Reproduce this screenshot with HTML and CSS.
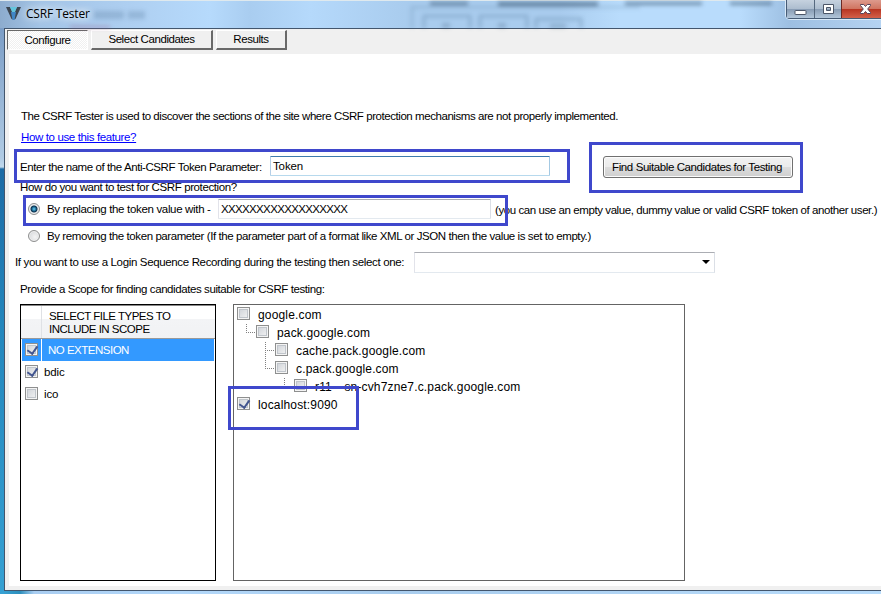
FILE: index.html
```html
<!DOCTYPE html>
<html lang="en">
<head>
  <meta charset="UTF-8">
  <title>CSRF Tester</title>
  <link rel="stylesheet" href="styles.css">
</head>
<body>
  <div class="window">
    <header class="titlebar">
      <svg class="logo" width="15" height="14" viewBox="0 0 15 14">
        <path d="M0 1h4l3 6 .5 6.500L5.500 13z" fill="#3d4650"/>
        <path d="M15 1h-4L8 7l-.5 6.500L9.500 13z" fill="#3d4650"/>
        <path d="M4 1h7L9 6H6z" fill="#63c5dc"/>
        <path d="M5 6h5L8.500 14h-2z" fill="#3f86c6"/>
      </svg>
      <h1 class="title">CSRF Tester</h1>
      <div class="glass">
        <svg width="710" height="28" viewBox="0 0 710 28">
          <g fill="#3d5f86">
            <path d="M24 10h30v8H24zM58 10h17v8H58z" opacity=".22"/>
            <path d="M0 25h40v3H0z" fill="#9c5f8d" opacity=".5"/>
          </g>
          <g fill="none" stroke="#4d6f92" stroke-width="3">
            <path d="M342 28V6H570" opacity=".2"/>
            <path d="M354 30V15H400V30M410 30V15H457V30M466 30V18H511V30" opacity=".3"/>
          </g>
          <g fill="#27425c" opacity=".55">
            <path d="M360 1h38v3H360zM428 1h100v4H428zM555 1h77v3h-77zM660 1h42v3h-42z"/>
            <path d="M372 22h8v5h-8zM428 22h8v5h-8zM480 23h16v5h-16z" opacity=".4"/>
          </g>
        </svg>
      </div>
      <div class="win-buttons">
        <span class="win-btn min"><svg width="13" height="13" viewBox="0 0 13 13"><rect x="1" y="7.500" width="11" height="4" rx=".5" fill="#fff" stroke="#4c5668"/></svg></span>
        <span class="win-btn max"><svg width="13" height="13" viewBox="0 0 13 13"><path fill-rule="evenodd" d="M1.500 1.500h10v9h-10zM4.500 4.500h4v3h-4z" fill="#fff" stroke="#4c5668"/></svg></span>
        <span class="win-btn close"><svg width="13" height="12" viewBox="0 0 13 12"><path d="M1.500 1.500h3.200l1.800 2 1.800-2h3.200v1L8.700 6l2.800 3.500v1H8.300l-1.800-2-1.800 2H1.500v-1L4.300 6 1.500 2.500z" fill="#fff" stroke="#58445a"/></svg></span>
      </div>
    </header>

    <main class="client">
      <nav class="tabs">
        <span class="tab active">Configure</span>
        <span class="tab candidates">Select Candidates</span>
        <span class="tab results">Results</span>
      </nav>

      <section class="panel">
        <p class="row intro">The CSRF Tester is used to discover the sections of the site where CSRF protection mechanisms are not properly implemented.</p>
        <p class="row help"><a href="#">How to use this feature?</a></p>
        <div class="row name">
          <label>Enter the name of the Anti-CSRF Token Parameter:</label>
          <div class="field token">Token</div>
          <button class="find">Find Suitable Candidates for Testing</button>
        </div>
        <p class="row question">How do you want to test for CSRF protection?</p>
        <div class="row replace">
          <span class="radio on"></span>
          <label>By replacing the token value with -</label>
          <div class="field value">XXXXXXXXXXXXXXXXXX</div>
          <span class="hint">(you can use an empty value, dummy value or valid CSRF token of another user.)</span>
        </div>
        <div class="row remove">
          <span class="radio"></span>
          <label>By removing the token parameter (If the parameter part of a format like XML or JSON then the value is set to empty.)</label>
        </div>
        <div class="row login">
          <label>If you want to use a Login Sequence Recording during the testing then select one:</label>
          <div class="combo"><svg width="8" height="4" viewBox="0 0 8 4"><path d="M0 0h8L4 4z"/></svg></div>
        </div>
        <p class="row scope">Provide a Scope for finding candidates suitable for CSRF testing:</p>

        <div class="lists">
          <div class="types">
            <div class="types-head">
              <span class="corner"></span>
              <span class="head-text">SELECT FILE TYPES TO<br>INCLUDE IN SCOPE</span>
            </div>
            <div class="type selected"><span class="cell"><i class="check on"></i></span><span class="label">NO EXTENSION</span></div>
            <div class="type"><span class="cell"><i class="check on"></i></span><span class="label">bdic</span></div>
            <div class="type"><span class="cell"><i class="check"></i></span><span class="label">ico</span></div>
          </div>
          <div class="tree">
            <div class="node"><i class="check"></i><span>google.com</span></div>
            <div class="node lv1"><i class="line end"></i><i class="check"></i><span>pack.google.com</span></div>
            <div class="node lv2"><i class="line"></i><i class="check"></i><span>cache.pack.google.com</span></div>
            <div class="node lv2"><i class="line end"></i><i class="check"></i><span>c.pack.google.com</span></div>
            <div class="node lv3"><i class="line end"></i><i class="check"></i><span>r11---sn-cvh7zne7.c.pack.google.com</span></div>
            <div class="node"><i class="check on"></i><span>localhost:9090</span></div>
          </div>
        </div>
      </section>
    </main>

    <div class="mark mark-name"></div>
    <div class="mark mark-find"></div>
    <div class="mark mark-replace"></div>
    <div class="mark mark-host"></div>
  </div>
</body>
</html>
```

FILE: styles.css
```css
* {
  box-sizing: border-box;
}
body {
  margin: 0;
  font: 11.5px/14px "Liberation Sans", Arial, sans-serif;
  letter-spacing: -0.42px;
  color: #000;
}
p, h1 {
  margin: 0;
}
.window {
  position: relative;
  width: 881px;
  height: 594px;
  overflow: hidden;
  padding: 0 0 3px 4px;
  background:
    linear-gradient(#7b9dc6, #b0cbe4 130px, #c0d8ec 139px, #1d6ba5 141px, #2487bd 300px, #38a3d5) 0 28px / 4px 100% no-repeat,
    linear-gradient(90deg, #38a3d5, #2d8fbd 20px, #a9cdf1 34px, #b3d8fa 180px, #a9cdee 400px, #b8dcfb);
}

/* title bar */
.titlebar {
  position: relative;
  display: flex;
  height: 28px;
  margin-left: -4px;
  border-top: 1px solid #dfe9ee;
  background: linear-gradient(90deg, #8dacce, #a3c4e6 40px, #aecff1 130px, #b6dafc 210px, #a9cdf0 250px, #b5d9fb 310px, #a9ccee 405px, #a9ccee 560px, #b9dcfc 620px, #b9dcfc 740px, #9dbfe2 790px, #b5d3f2);
}
.logo {
  margin: 5px 0 0 6px;
}
.title {
  position: relative;
  z-index: 1;
  margin: 5px 0 0 5px;
  font: 12px/16px "Open Sans", sans-serif;
  letter-spacing: -0.2px;
  white-space: nowrap;
  text-shadow: 0 0 7px #fff, 0 0 10px #fff;
}
.glass {
  position: absolute;
  left: 70px;
  top: 0;
  height: 27px;
  overflow: hidden;
  filter: blur(2px);
}
.win-buttons {
  position: absolute;
  right: -9px;
  top: -1px;
  display: flex;
  height: 19px;
  border: 1px solid #465b75;
  border-top: 0;
  border-radius: 0 0 4px 4px;
  box-shadow: 0 0 0 1px #d9e9f8;
}
.win-btn {
  display: flex;
  justify-content: center;
  align-items: center;
  width: 27px;
  background: linear-gradient(#c6d2df, #adbdcf 48%, #889cb4 52%, #b2c6da);
}
.win-btn.max {
  border-left: 1px solid #56697f;
}
.win-btn.close {
  width: 48px;
  border-left: 1px solid #6c2a24;
  background: linear-gradient(#dd9a8d, #d07561 48%, #b83522 52%, #d3604a);
}

/* client area */
.client {
  height: 563px;
  padding: 1px 0 4px 4px;
  border: solid #43566d;
  border-width: 1px 0 1px 1px;
  background: #f0f0f0;
}
.tabs {
  display: flex;
  height: 24px;
  margin-left: -2px;
}
.tab {
  display: flex;
  justify-content: center;
  height: 20px;
  padding-top: 1px;
  border: solid #fff;
  border-width: 1px 2px 2px 1px;
  border-right-color: #696969;
  border-bottom-color: #696969;
  white-space: nowrap;
}
.tab.active {
  width: 81px;
  padding-top: 2px;
  border: 1px solid #696969;
  border-right-color: #fff;
  border-bottom-color: #fff;
  background: repeating-conic-gradient(#fff 0 25%, #f0f0f0 0 50%) 0 0 / 2px 2px;
}
.tab.candidates {
  width: 122px;
  margin-left: 3px;
}
.tab.results {
  width: 71px;
  margin-left: 3px;
}
.panel {
  height: 532px;
  padding-top: 53px;
  background: #fff;
}
.row {
  display: flex;
  align-items: center;
  white-space: nowrap;
}
.row > * {
  flex: none;
}
.intro {
  height: 18px;
  padding-left: 12px;
  letter-spacing: -0.44px;
}
.help {
  height: 24px;
  padding-left: 12px;
  letter-spacing: -0.37px;
}
.help a {
  color: #00f;
}
.name {
  height: 34px;
  padding-left: 11px;
}
.name label {
  width: 250px;
  padding-top: 2px;
}
.field {
  display: flex;
  align-items: center;
  height: 20px;
  padding-left: 2px;
  border: 1px solid #abadb3;
  border-color: #abadb3 #dbdfe6 #e3e9ef #e2e3ea;
  border-radius: 1px;
}
.token {
  width: 280px;
  border-color: #3d7bad #a4c9e3 #b7d9ed #b5cfe7;
  letter-spacing: -0.13px;
}
.find {
  width: 190px;
  height: 22px;
  margin: 2px 0 0 53px;
  padding: 0 2px 0 0;
  border: 1px solid #707070;
  border-radius: 3px;
  background: linear-gradient(#f2f2f2, #ebebeb 49%, #dddddd 50%, #cfcfcf);
  box-shadow: inset 0 0 0 1px #fcfcfc;
  font: inherit;
  letter-spacing: -0.41px;
}
.question {
  height: 12px;
  padding: 0 0 4px 11px;
  letter-spacing: -0.39px;
}
.replace {
  height: 28px;
  padding-left: 19px;
}
.replace label {
  width: 171px;
  letter-spacing: -0.33px;
}
.radio {
  width: 12px;
  height: 12px;
  margin-right: 7px;
  border: 1px solid #8e8f8f;
  border-radius: 50%;
  background: radial-gradient(circle at 60% 60%, #f4f4f4, #cfd2d5);
  box-shadow: inset 0 0 0 1px #f0f0f0;
}
.radio.on {
  background: radial-gradient(circle, #6fd0f5 0, #1a6a94 2px, #0c2f4c 3px, #e0e4e8 4px);
}
.value {
  width: 273px;
  letter-spacing: -0.65px;
}
.hint {
  padding: 2px 0 0 4px;
}
.remove {
  height: 26px;
  padding-left: 19px;
}
.login {
  height: 26px;
  padding-left: 6px;
  letter-spacing: -0.35px;
}
.login label {
  width: 399px;
}
.combo {
  display: flex;
  align-items: center;
  justify-content: flex-end;
  width: 301px;
  height: 21px;
  padding-right: 4px;
  border: 1px solid #abadb3;
  border-color: #abadb3 #dbdfe6 #e3e9ef #e2e3ea;
}
.scope {
  height: 29px;
  padding: 0 0 2px 11px;
  letter-spacing: -0.41px;
}

/* file types and site tree */
.lists {
  display: flex;
  gap: 17px;
  padding-left: 11px;
}
.types {
  width: 196px;
  height: 277px;
  padding: 0 1px;
  border: 1px solid #000;
  letter-spacing: -0.1px;
}
.types-head {
  display: flex;
  height: 34px;
  margin: 0 -1px;
  border-top: 1px solid #888;
  border-bottom: 1px solid #999;
  background: linear-gradient(#fff 40%, #f3f4f6 41%, #f1f2f4);
}
.corner {
  width: 21px;
  border-right: 1px solid #dfe1e5;
}
.head-text {
  padding: 4px 0 0 7px;
  line-height: 13px;
  letter-spacing: -0.5px;
  white-space: nowrap;
}
.type {
  display: flex;
  align-items: center;
  height: 22px;
}
.type.selected {
  background: #39f;
  color: #fff;
  letter-spacing: -0.5px;
}
.cell {
  display: flex;
  width: 20px;
  height: 22px;
  padding: 4px 0 0 3px;
}
.selected .cell {
  border-right: 1px solid #fff;
}
.label {
  padding-left: 2px;
}
.selected .label {
  padding-left: 6px;
}
.check {
  position: relative;
  flex: none;
  width: 13px;
  height: 13px;
  border: 1px solid #8e8f8f;
  background: linear-gradient(135deg, #cbcfd5, #f6f6f6);
  box-shadow: inset 0 0 0 1px #f4f4f4, inset 0 0 0 2px #c0c5cb;
}
.check.on::after {
  content: "";
  position: absolute;
  left: 3px;
  top: 0;
  width: 5px;
  height: 8px;
  border: solid #42558f;
  border-width: 0 2px 2px 0;
  transform: rotate(35deg);
}
.tree {
  width: 452px;
  height: 277px;
  padding: 1px 0 0 3px;
  border: 1px solid #646464;
  font-size: 12px;
  letter-spacing: 0.16px;
}
.node {
  display: flex;
  align-items: center;
  height: 18px;
  white-space: nowrap;
}
.node .check {
  margin: -3px 8px 0 0;
}
.lv1 {
  padding-left: 9px;
}
.lv2 {
  padding-left: 28px;
}
.lv3 {
  padding-left: 47px;
}
.line {
  width: 10px;
  height: 18px;
  background:
    repeating-linear-gradient(#808080 0 1px, transparent 1px 2px) 0 0 / 1px 18px no-repeat,
    repeating-linear-gradient(90deg, #808080 0 1px, transparent 1px 2px) 0 8px / 10px 1px no-repeat;
}
.line.end {
  background-size: 1px 9px, 10px 1px;
}

/* highlight frames over the form */
.mark {
  position: absolute;
  border: 3px solid #3f48cc;
}
.mark-name {
  left: 14px;
  top: 149px;
  width: 556px;
  height: 34px;
}
.mark-find {
  left: 589px;
  top: 142px;
  width: 214px;
  height: 51px;
}
.mark-replace {
  left: 23px;
  top: 195px;
  width: 485px;
  height: 31px;
}
.mark-host {
  left: 228px;
  top: 386px;
  width: 131px;
  height: 44px;
}
```
